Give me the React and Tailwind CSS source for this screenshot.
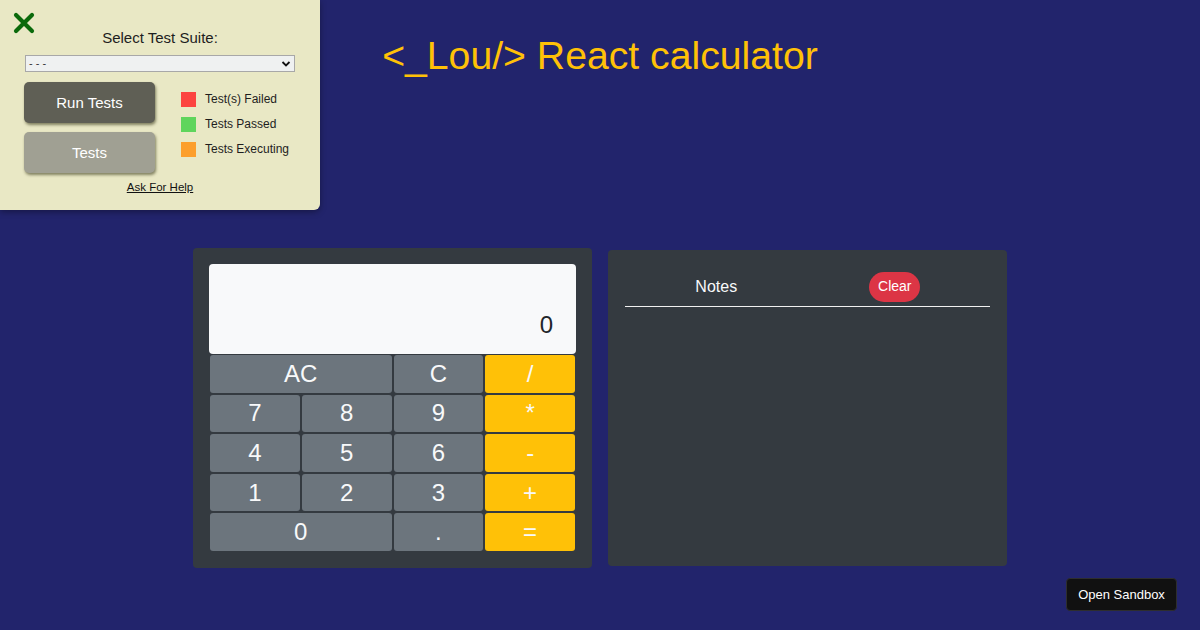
import React from "react";

const F = { fontFamily: '"Liberation Sans", Arial, sans-serif' };

function Key({ label, span = 1, op = false }) {
  return (
    <div
      className={`${span === 2 ? "col-span-2" : ""} ${op ? "bg-[#ffc107]" : "bg-[#6c757d]"} rounded-[3px] flex items-center justify-center text-[24px] text-[#f8f9fa] leading-none`}
    >
      {label}
    </div>
  );
}

export default function App() {
  const keys = [
    ["AC", 2], ["C", 1], ["/", 1, true],
    ["7"], ["8"], ["9"], ["*", 1, true],
    ["4"], ["5"], ["6"], ["-", 1, true],
    ["1"], ["2"], ["3"], ["+", 1, true],
    ["0", 2], [".", 1], ["=", 1, true],
  ];
  return (
    <div className="w-[1200px] h-[630px] bg-[#22246c] relative overflow-hidden" style={F}>
      <h1 className="text-center text-[39.2px] leading-[48px] text-[#ffc107] pt-[32px]">
        {"<_Lou/> React calculator"}
      </h1>

      <div className="flex justify-center items-center gap-4 mt-[168px]">
        <div className="w-[399px] bg-[#343a40] rounded-[4px] p-4">
          <div className="h-[90px] bg-[#f8f9fa] rounded-[4px] flex items-end justify-end pr-[23px] pb-[11px] text-[24px] leading-[36px] text-[#212529]">
            0
          </div>
          <div className="grid grid-cols-4 gap-[2px] p-px auto-rows-[37.6px]">
            {keys.map(([l, s, o], i) => (
              <Key key={i} label={l} span={s || 1} op={!!o} />
            ))}
          </div>
        </div>

        <div className="w-[399px] h-[316px] bg-[#343a40] rounded-[4px] px-[17px] pt-[22px]">
          <div className="grid grid-cols-2 items-center border-b border-[#f0f0f0] pb-[4px]">
            <div className="text-center text-[16px] text-[#f8f9fa]">Notes</div>
            <div className="flex justify-center pr-[8px]">
              <div className="bg-[#dc3545] text-white text-[14px] rounded-full h-[30px] px-[9px] flex items-center">
                Clear
              </div>
            </div>
          </div>
        </div>
      </div>

      {/* Test panel overlay */}
      <div className="absolute left-0 top-0 w-[320px] h-[210px] bg-[#e9e8c5] rounded-br-[6px] shadow-[0_2px_6px_rgba(0,0,0,0.35)]">
        <svg className="absolute left-[12px] top-[11px]" width="24" height="24" viewBox="0 0 24 24">
          <path d="M4 4 L20 20 M20 4 L4 20" stroke="#0b6a0b" strokeWidth="4.2" strokeLinecap="round" />
        </svg>
        <div className="text-center text-[15px] text-[#1e1e1e] pt-[29px] leading-[18px]">Select Test Suite:</div>
        <div className="mx-[25px] mt-[8px] h-[17px] bg-[#eff1f1] border border-[#a8a8a8] flex items-center justify-between px-[3px] text-[11px] text-[#333]">
          <span className="leading-none">- - -</span>
          <svg width="10" height="8" viewBox="0 0 10 8">
            <path d="M1.5 2 L5 5.5 L8.5 2" stroke="#111" strokeWidth="1.8" fill="none" />
          </svg>
        </div>
        <div className="flex mt-[10px] pl-[24px]">
          <div className="flex flex-col gap-[9px]">
            <div className="w-[131px] h-[41px] bg-[#5f5f55] rounded-[5px] text-white text-[15px] flex items-center justify-center pt-px shadow-[1px_2px_3px_rgba(60,60,30,0.6)]">
              Run Tests
            </div>
            <div className="w-[131px] h-[41px] bg-[#a0a093] rounded-[5px] text-white text-[15px] flex items-center justify-center pt-px shadow-[1px_2px_3px_rgba(60,60,30,0.6)]">
              Tests
            </div>
          </div>
          <div className="flex flex-col gap-[7px] ml-[26px] mt-[8px] text-[12px] text-[#1e1e1e]">
            <div className="flex items-center gap-[9px]"><span className="w-[15px] h-[15px] bg-[#fc4440]" />Test(s) Failed</div>
            <div className="flex items-center gap-[9px]"><span className="w-[15px] h-[15px] bg-[#5fd55c]" />Tests Passed</div>
            <div className="flex items-center gap-[9px]"><span className="w-[15px] h-[15px] bg-[#fc9f2c]" />Tests Executing</div>
          </div>
        </div>
        <div className="text-center text-[11.5px] underline text-[#111] mt-[6px]">Ask For Help</div>
      </div>

      {/* Open Sandbox */}
      <div className="absolute left-[1066px] top-[578px] w-[111px] h-[33px] bg-[#111111] border border-[#2e2e2e] rounded-[4px] text-white text-[13px] flex items-center justify-center">
        Open Sandbox
      </div>
    </div>
  );
}
